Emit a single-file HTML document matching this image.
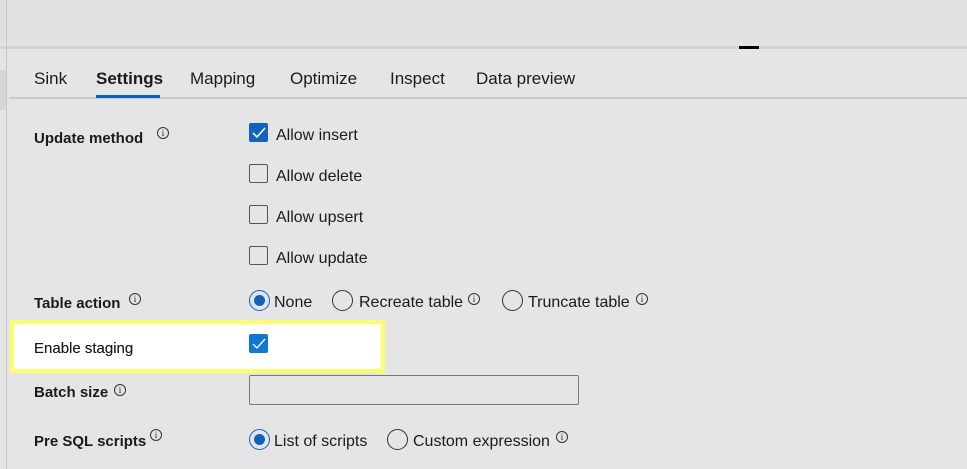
<!DOCTYPE html>
<html><head><style>
body{margin:0;width:967px;height:469px;background:#e5e5e5;font-family:"Liberation Sans",sans-serif;font-size:16px;color:#222;position:relative;overflow:hidden}
.a{position:absolute;white-space:nowrap}
.lbl{font-weight:bold;font-size:15px;color:#1b1b1b}
.cb{position:absolute;width:19px;height:19px;border:1px solid #555;border-radius:2px;box-sizing:border-box;background:transparent}
.cb.on{background:#0f62bf;border-color:#0f62bf}
.rd{position:absolute;width:21px;height:21px;border:1px solid #333;border-radius:50%;box-sizing:border-box}
.rd.on{border-color:#0f62bf}
.rd.on::after{content:"";position:absolute;left:4px;top:4px;width:11px;height:11px;border-radius:50%;background:#0f62bf}
.i{position:absolute;width:12px;height:12px;border:1px solid #333;border-radius:50%;box-sizing:border-box;font-size:9px;line-height:10px;text-align:center;font-family:"Liberation Serif",serif}
.t{font-size:16px;color:#1b1b1b}
</style></head><body>
<div class="a" style="left:0;top:0;width:967px;height:42px;background:#e0e0e0"></div>
<div class="a" style="left:0;top:42px;width:967px;height:4px;background:#e3e3e3"></div>
<div class="a" style="left:0;top:46px;width:967px;height:3px;background:#d3d3d3"></div>
<div class="a" style="left:739px;top:46px;width:20px;height:3px;background:#000"></div>
<div class="a" style="left:0;top:70px;width:6px;height:40px;background:#d6d6d6"></div>
<div class="a" style="left:6px;top:0;width:1px;height:469px;background:#c8c8c8"></div>
<div class="a" style="left:9px;top:97px;width:958px;height:2px;background:#cacaca"></div>
<div class="a" style="left:96px;top:95px;width:64px;height:3px;background:#0062c4"></div>
<div class="a t" style="left:34px;top:69px;font-size:17px">Sink</div>
<div class="a t" style="left:96px;top:69px;font-size:17px;font-weight:bold">Settings</div>
<div class="a t" style="left:190px;top:69px;font-size:17px">Mapping</div>
<div class="a t" style="left:290px;top:69px;font-size:17px">Optimize</div>
<div class="a t" style="left:390px;top:69px;font-size:17px">Inspect</div>
<div class="a t" style="left:476px;top:69px;font-size:17px">Data preview</div>

<div class="a lbl" style="left:34px;top:130px">Update method</div><div class="i" style="left:157px;top:127px">i</div>
<div class="cb on" style="left:249px;top:123px"><svg width="19" height="19" style="position:absolute;left:-1px;top:-1px"><path d="M4 10l4 4 8-9" stroke="#fff" stroke-width="1.6" fill="none"/></svg></div>
<div class="a t" style="left:276px;top:127px">Allow insert</div>
<div class="cb" style="left:249px;top:164px"></div><div class="a t" style="left:276px;top:168px">Allow delete</div>
<div class="cb" style="left:249px;top:205px"></div><div class="a t" style="left:276px;top:209px">Allow upsert</div>
<div class="cb" style="left:249px;top:246px"></div><div class="a t" style="left:276px;top:250px">Allow update</div>

<div class="a lbl" style="left:34px;top:295px">Table action</div><div class="i" style="left:129px;top:293px">i</div>
<div class="rd on" style="left:249px;top:290px"></div><div class="a t" style="left:274px;top:294px">None</div>
<div class="rd" style="left:332px;top:290px"></div><div class="a t" style="left:359px;top:294px">Recreate table</div><div class="i" style="left:468px;top:293px">i</div>
<div class="rd" style="left:502px;top:290px"></div><div class="a t" style="left:528px;top:294px">Truncate table</div><div class="i" style="left:636px;top:293px">i</div>

<div class="a" style="left:10px;top:320px;width:375px;height:53px;background:#fff;border:4px solid #fdfd6a;box-sizing:border-box"></div>
<div class="a lbl" style="left:34px;top:340px;font-weight:normal;text-shadow:0 0 0 #1b1b1b">Enable staging</div>
<div class="cb on" style="left:249px;top:334px;background:#0f78d4;border-color:#0f78d4"><svg width="19" height="19" style="position:absolute;left:-1px;top:-1px"><path d="M4 10l4 4 8-9" stroke="#fff" stroke-width="1.4" fill="none"/></svg></div>

<div class="a lbl" style="left:34px;top:384px">Batch size</div><div class="i" style="left:114px;top:384px">i</div>
<div class="a" style="left:249px;top:375px;width:330px;height:30px;border:1px solid #777;box-sizing:border-box;border-radius:2px"></div>

<div class="a lbl" style="left:34px;top:433px">Pre SQL scripts</div><div class="i" style="left:150px;top:429px">i</div>
<div class="rd on" style="left:249px;top:429px"></div><div class="a t" style="left:274px;top:433px">List of scripts</div>
<div class="rd" style="left:387px;top:429px"></div><div class="a t" style="left:413px;top:433px">Custom expression</div><div class="i" style="left:556px;top:431px">i</div>
</body></html>
